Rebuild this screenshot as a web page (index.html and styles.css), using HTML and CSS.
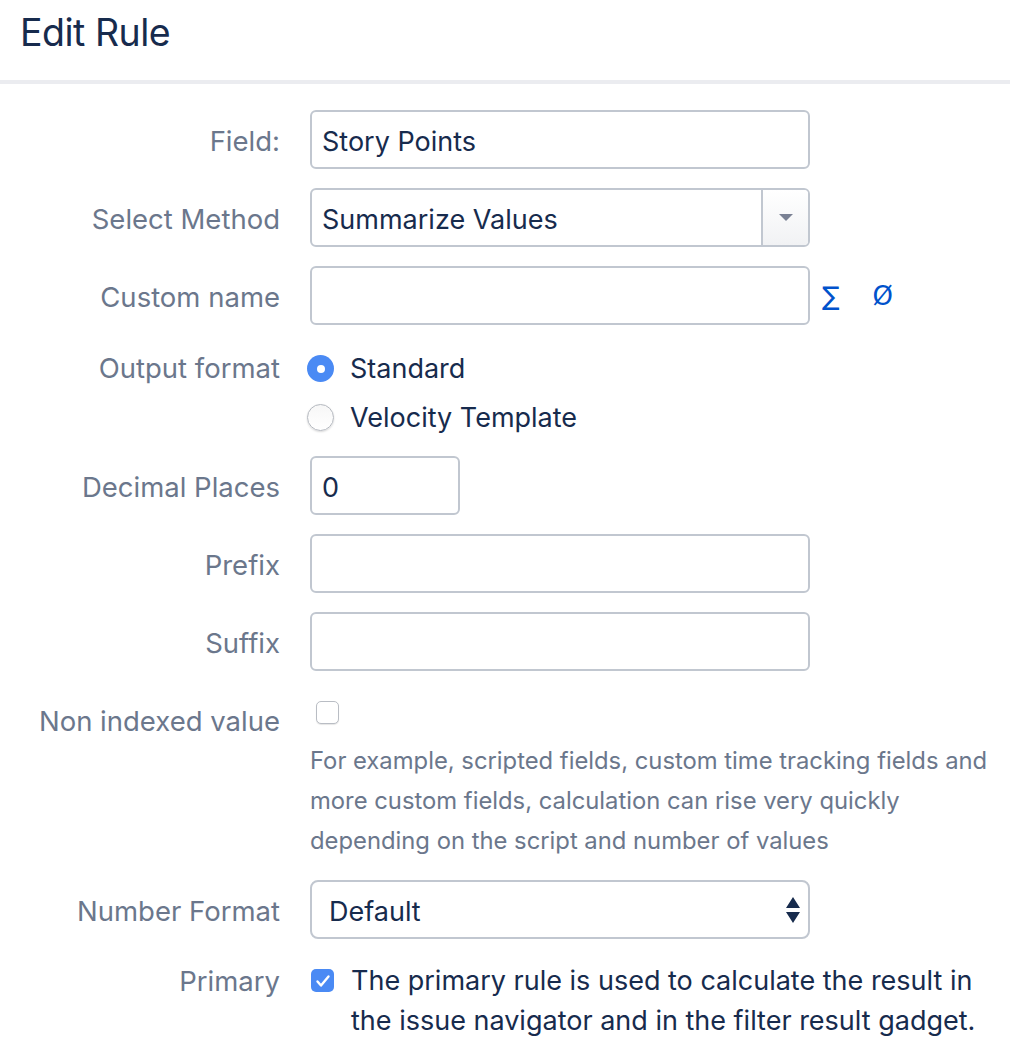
FILE: index.html
```html
<!DOCTYPE html>
<html lang="en">
<head>
<meta charset="utf-8">
<title>Edit Rule</title>
<link rel="stylesheet" href="styles.css">
</head>
<body>
<div class="dialog">
  <header class="dialog-header">
    <h2 class="dialog-title">Edit Rule</h2>
  </header>
  <form class="rule-form">
    <div class="row">
      <label class="label">Field:</label>
      <div class="value"><div class="text-input wide">Story Points</div></div>
    </div>
    <div class="row">
      <label class="label">Select Method</label>
      <div class="value">
        <div class="text-input wide combo">
          <span class="combo-text">Summarize Values</span>
          <span class="combo-btn"><svg width="14" height="8" viewBox="0 0 14 8"><path d="M0 0h14L7 7z" fill="#7a8194"/></svg></span>
        </div>
      </div>
    </div>
    <div class="row">
      <label class="label">Custom name</label>
      <div class="value inline">
        <div class="text-input wide"></div>
        <a class="sym sigma">∑</a>
        <a class="sym empty">Ø</a>
      </div>
    </div>
    <div class="row radios-row">
      <label class="label line49">Output format</label>
      <div class="value">
        <div class="radio-line"><span class="radio checked"></span><span class="opt">Standard</span></div>
        <div class="radio-line"><span class="radio"></span><span class="opt">Velocity Template</span></div>
      </div>
    </div>
    <div class="row">
      <label class="label">Decimal Places</label>
      <div class="value"><div class="text-input short">0</div></div>
    </div>
    <div class="row">
      <label class="label">Prefix</label>
      <div class="value"><div class="text-input wide"></div></div>
    </div>
    <div class="row">
      <label class="label">Suffix</label>
      <div class="value"><div class="text-input wide"></div></div>
    </div>
    <div class="row nonindexed">
      <label class="label line40">Non indexed value</label>
      <div class="value">
        <span class="checkbox"></span>
        <p class="help">For example, scripted fields, custom time tracking fields and more custom fields, calculation can rise very quickly depending on the script and number of values</p>
      </div>
    </div>
    <div class="row">
      <label class="label">Number Format</label>
      <div class="value">
        <div class="text-input wide native-select">
          <span class="native-text">Default</span>
          <svg class="updown" width="14" height="26" viewBox="0 0 14 26"><path d="M7 0L14 11H0z M0 15h14L7 26z" fill="#172b4d"/></svg>
        </div>
      </div>
    </div>
    <div class="row primary">
      <label class="label line40">Primary</label>
      <div class="value check-line">
        <span class="checkbox checked"><svg width="16" height="14" viewBox="0 0 16 14"><path d="M2.5 7.5l3.5 4L13.5 2.5" fill="none" stroke="#fff" stroke-width="2.4" stroke-linecap="round" stroke-linejoin="round"/></svg></span>
        <span class="primary-text">The primary rule is used to calculate the result in the issue navigator and in the filter result gadget.</span>
      </div>
    </div>
  </form>
</div>
</body>
</html>
```

FILE: styles.css
```css
html, body {
  margin: 0;
  padding: 0;
  background: #fff;
}
body {
  font-family: Inter, "Noto Sans", "Liberation Sans", sans-serif;
  color: #172b4d;
  font-size: 28px;
}
.dialog-header {
  height: 80px;
  border-bottom: 4px solid #ebecf0;
  box-sizing: content-box;
  padding-left: 20px;
  display: flex;
  align-items: center;
}
.dialog-title {
  margin: 0;
  font-size: 37.5px;
  font-weight: 400;
  color: #172b4d;
  letter-spacing: -0.5px;
  position: relative;
  top: -8px;
}
.rule-form {
  padding-top: 26px;
}
.row {
  display: grid;
  grid-template-columns: 280px 1fr;
  column-gap: 30px;
  margin-bottom: 19px;
}
.label {
  text-align: right;
  color: #6b778c;
  box-sizing: border-box;
  height: 59px;
  padding-top: 4px;
  line-height: 55px;
  font-size: 27.5px;
}
.label.line49 { height: 49px; padding-top: 0; line-height: 49px; }
.label.line40 { height: 40px; padding-top: 0; line-height: 40px; }
.value { min-width: 0; }
.value.inline {
  display: flex;
  align-items: center;
}
.text-input {
  box-sizing: border-box;
  height: 59px;
  border: 2px solid #c1c7d0;
  border-radius: 6px;
  padding: 4px 10px 0;
  display: flex;
  align-items: center;
  font-size: 27px;
  color: #172b4d;
  background: #fff;
}
.text-input.wide { width: 500px; }
.text-input.short { width: 150px; }
.combo {
  padding-right: 0;
  padding-top: 0;
  overflow: hidden;
}
.combo-text { flex: 1; padding-top: 4px; }
.combo-btn {
  width: 45px;
  height: 100%;
  border-left: 2px solid #c1c7d0;
  background: linear-gradient(#ffffff, #f1f2f4);
  display: flex;
  align-items: center;
  justify-content: center;
}
.sym {
  color: #0052cc;
  font-size: 26px;
  text-decoration: none;
  font-family: "DejaVu Sans", sans-serif;
}
.sigma { margin-left: 12px; }
.empty { margin-left: 33px; }
.radios-row { margin-bottom: 14px; }
.radio-line {
  height: 49px;
  display: flex;
  align-items: center;
}
.radio {
  box-sizing: border-box;
  width: 27px;
  height: 27px;
  border-radius: 50%;
  border: 1.5px solid #b4b8bf;
  background: linear-gradient(#f7f7f7, #fff);
  box-shadow: 0 1px 2px rgba(0,0,0,0.15);
  margin-left: -3px;
  margin-right: 16px;
  position: relative;
}
.radio.checked {
  border: none;
  background: #4a8af4;
  box-shadow: none;
}
.radio.checked::after {
  content: "";
  position: absolute;
  left: 50%;
  top: 50%;
  width: 8px;
  height: 8px;
  margin: -4px 0 0 -4px;
  border-radius: 50%;
  background: #fff;
}
.opt { font-size: 27px; color: #172b4d; }
.nonindexed { padding-top: 11px; }
.checkbox {
  box-sizing: border-box;
  display: block;
  width: 23px;
  height: 23px;
  border: 1.5px solid #b9bdc4;
  border-radius: 5px;
  background: #fff;
  box-shadow: 0 1px 1px rgba(0,0,0,0.1);
  margin: 0 0 17px 6px;
}
.help {
  margin: 0;
  font-size: 23.8px;
  line-height: 40px;
  color: #6b778c;
  max-width: 695px;
}
.native-select {
  justify-content: space-between;
  padding: 0 8px 0 17px;
  border-radius: 8px;
}
.native-text { padding-top: 4px; }
.updown { display: block; }
.primary { margin-top: 22px; }
.check-line {
  display: flex;
  align-items: flex-start;
}
.checkbox.checked {
  border: none;
  background: #4a8af4;
  margin: 8px 17px 0 1px;
  flex: none;
  display: flex;
  align-items: center;
  justify-content: center;
  box-shadow: none;
}
.primary-text {
  font-size: 27px;
  line-height: 40px;
  color: #172b4d;
}
```
